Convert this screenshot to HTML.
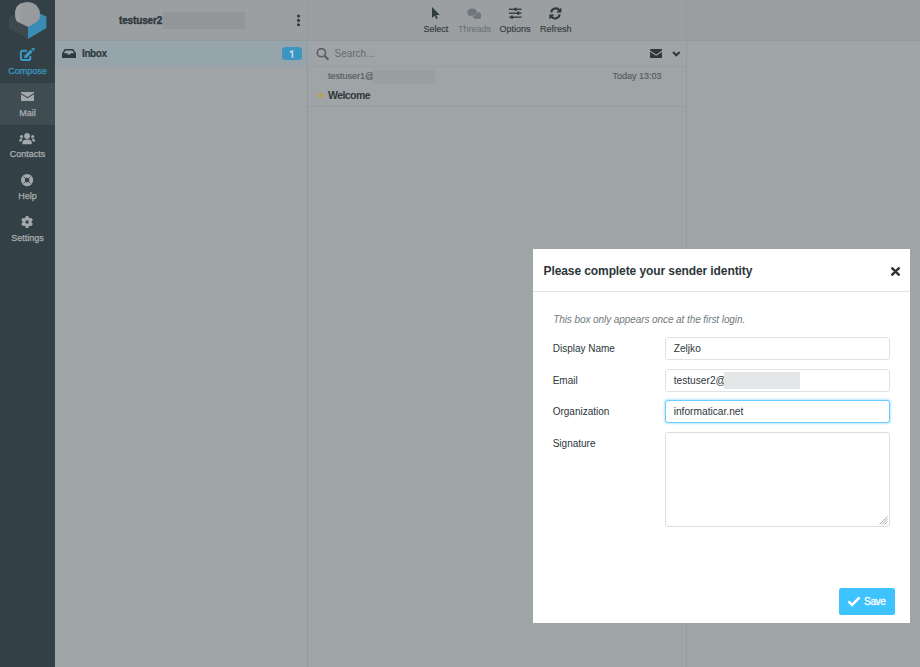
<!DOCTYPE html>
<html><head><meta charset="utf-8">
<style>
*{box-sizing:border-box;margin:0;padding:0}
html,body{width:920px;height:667px;overflow:hidden;background:#9fa4a6;font-family:"Liberation Sans",sans-serif}
.a{position:absolute}
#side{left:0;top:0;width:55px;height:667px;background:#334045}
.mi{position:absolute;left:0;width:55px;height:41.5px;color:#a3a8aa;font-size:9px}
.mi .t{position:absolute;left:0;width:55px;text-align:center;line-height:9px;white-space:nowrap;-webkit-text-stroke:0.25px currentColor;color:#abafb1}
.mi svg{position:absolute}
.hdr{position:absolute;left:0;top:0;right:0;height:41px;background:#9b9fa1;border-bottom:1px solid #93989a}
.vb{position:absolute;top:0;width:1px;height:667px;background:#959a9c}
.tb{position:absolute;top:24.8px;font-size:9px;line-height:9px;color:#343e42;-webkit-text-stroke:0.15px currentColor;white-space:nowrap}
.lbl{position:absolute;left:20px;font-size:10px;line-height:10px;color:#2c363a;white-space:nowrap}
.inp{position:absolute;left:132px;width:225px;height:23.5px;border:1px solid #dfe2e4;border-radius:3px;background:#fff}
.inp span{position:absolute;left:8px;top:6.6px;font-size:10.2px;line-height:10px;color:#2c363a;white-space:nowrap}
</style></head><body>
<div id="side" class="a">
  <svg class="a" style="left:0;top:0" width="55" height="42" viewBox="0 0 55 42">
    <polygon points="9,17.5 27.5,8 28,27 28,38.8 9,28.5" fill="#3d494e"/>
    <polygon points="27.5,8 46.2,16.5 46.2,28 28,38.8 28,27" fill="#3a8cb4"/>
    <circle cx="27.6" cy="14.3" r="12.4" fill="#989b9d"/>
    <path d="M22.5,2.6 q-7.5,2.5 -7.5,11.7 q0,9.2 7.5,11.7 q-3,-5 -3,-11.7 q0,-6.7 3,-11.7z" fill="#9ea1a3"/>
    <polygon points="9,17.5 28,27 28,38.8 9,28.5" fill="#3d494e"/>
    <polygon points="28,27 46.2,16.5 46.2,28 28,38.8" fill="#3a8cb4"/>
  </svg>
  <div class="mi" style="top:41.5px;color:#3a93bd">
    <svg style="left:19px;top:6px" width="17" height="15" viewBox="0 0 17 15">
      <path d="M8,2.8 h-4.6 q-1.5,0 -1.5,1.5 v6.3 q0,1.5 1.5,1.5 h6.4 q1.5,0 1.5,-1.5 v-2.6" stroke="#3b97c3" stroke-width="2" fill="none"/>
      <path d="M5,10.3 l0.6,-2.8 l6,-6 l2.2,2.2 l-6,6 z" fill="#3b97c3"/>
      <path d="M12.4,0.8 l1.2,-1.2 q0.6,-0.5 1.1,0 l1.1,1.1 q0.5,0.5 0,1.1 l-1.2,1.2 z" fill="#3b97c3"/>
    </svg>
    <div class="t" style="top:25px;color:#3b97c3">Compose</div>
  </div>
  <div class="mi" style="top:83px;background:#3f4c52">
    <svg style="left:21px;top:9px" width="13" height="9" viewBox="0 0 13 9">
      <path d="M0,0 h13 v1 l-6.5,4 -6.5,-4 z M0,2.2 l6.5,4 6.5,-4 v6.8 h-13 z" fill="#a3a8aa"/>
    </svg>
    <div class="t" style="top:25.5px">Mail</div>
  </div>
  <div class="mi" style="top:124.5px">
    <svg style="left:19px;top:8px" width="17" height="12" viewBox="0 0 17 12">
      <circle cx="8.1" cy="3" r="2.9" fill="#a3a8aa"/>
      <circle cx="2.5" cy="3.5" r="1.6" fill="#a3a8aa"/>
      <circle cx="13.7" cy="3.5" r="1.6" fill="#a3a8aa"/>
      <path d="M3.4,11.3 v-1.6 q0,-3.3 4.7,-3.3 q4.7,0 4.7,3.3 v1.6 z" fill="#a3a8aa"/>
      <path d="M0.2,8.5 v-1 q0,-1.9 2.3,-1.9 h1.3 q-1,0.9 -1.2,2.9z M16,8.5 v-1 q0,-1.9 -2.3,-1.9 h-1.3 q1,0.9 1.2,2.9z" fill="#a3a8aa"/>
    </svg>
    <div class="t" style="top:25.5px">Contacts</div>
  </div>
  <div class="mi" style="top:166px">
    <svg style="left:21px;top:7.5px" width="13" height="13" viewBox="0 0 13 13">
      <circle cx="6.1" cy="6.1" r="4.2" stroke="#a3a8aa" stroke-width="3.8" fill="none"/>
      <path d="M2.6,2.6 l2,2 M9.6,2.6 l-2,2 M2.6,9.6 l2,-2 M9.6,9.6 l-2,-2" stroke="#334045" stroke-width="0.8"/>
    </svg>
    <div class="t" style="top:26px">Help</div>
  </div>
  <div class="mi" style="top:207.5px">
    <svg style="left:21px;top:8.5px" width="13" height="13" viewBox="0 0 13 13">
      <g fill="#a3a8aa"><circle cx="6.1" cy="6" r="4.7"/>
      <rect x="4.6" y="0.1" width="3" height="11.8" rx="0.6" transform="rotate(0 6.1 6)"/>
      <rect x="4.6" y="0.1" width="3" height="11.8" rx="0.6" transform="rotate(60 6.1 6)"/>
      <rect x="4.6" y="0.1" width="3" height="11.8" rx="0.6" transform="rotate(120 6.1 6)"/></g>
      <circle cx="6.1" cy="6" r="1.7" fill="#334045"/>
    </svg>
    <div class="t" style="top:26.2px">Settings</div>
  </div>
</div>

<!-- folder pane -->
<div class="a" style="left:55px;top:0;width:253px;height:667px">
  <div class="hdr"></div>
  <div class="a" style="left:64px;top:15.8px;font-size:10px;line-height:10px;font-weight:bold;color:#2f393d;letter-spacing:-0.15px;-webkit-text-stroke:0.35px currentColor">testuser2</div>
  <div class="a" style="left:108px;top:12px;width:82px;height:16.5px;background:#929698;filter:blur(0.6px)"></div>
  <svg class="a" style="left:241px;top:14px" width="5" height="13" viewBox="0 0 5 13">
    <circle cx="2.5" cy="2" r="1.55" fill="#2f393d"/><circle cx="2.5" cy="6.4" r="1.55" fill="#2f393d"/><circle cx="2.5" cy="10.7" r="1.55" fill="#2f393d"/>
  </svg>
  <div class="a" style="left:0;top:41px;width:253px;height:25.3px;background:#96a4ab"></div>
  <svg class="a" style="left:7px;top:48.7px" width="14" height="9.2" viewBox="0 0 14 10" preserveAspectRatio="none">
    <path d="M2.8,0 h8.4 l2.8,4.5 v4.5 q0,1 -1,1 h-12 q-1,0 -1,-1 v-4.5 z M3.6,1.5 l-1.8,3 h3.2 l1,1.4 h2 l1,-1.4 h3.2 l-1.8,-3 z" fill="#2f393d" fill-rule="evenodd"/>
  </svg>
  <div class="a" style="left:27px;top:48.5px;font-size:10px;line-height:10px;font-weight:bold;color:#2f393d;letter-spacing:-0.4px;-webkit-text-stroke:0.2px currentColor">Inbox</div>
  <div class="a" style="left:227px;top:46.8px;width:20px;height:13px;border-radius:3.5px;background:#3d95c1"></div>
  <svg class="a" style="left:234px;top:49.5px" width="6" height="8" viewBox="0 0 6 8"><path d="M2.6,0.3 h1.6 v7.4 h-1.6 v-5.5 l-1.9,0.7 v-1.4z" fill="#bcdcec"/></svg>
</div>


<!-- list pane -->
<div class="a" style="left:308px;top:0;width:378px;height:667px">
  <div class="hdr"></div>
  <svg class="a" style="left:124px;top:7px" width="8" height="12" viewBox="0 0 8 12">
    <path d="M0,0 v11 l2.6,-2.5 l1.6,3.5 l1.6,-0.8 l-1.6,-3.3 h3.6 z" fill="#2f393d"/>
  </svg>
  <div class="tb" style="left:115.5px;letter-spacing:-0.05px">Select</div>
  <svg class="a" style="left:159px;top:7.5px" width="15" height="12" viewBox="0 0 15 12">
    <ellipse cx="9.9" cy="7.5" rx="4.3" ry="3.6" fill="#6e777b"/>
    <path d="M12,10 l1.6,1.3 l-0.4,-2.2z" fill="#6e777b"/>
    <ellipse cx="5.1" cy="4.1" rx="5.3" ry="4" fill="#9c9fa1"/>
    <ellipse cx="5.1" cy="4.1" rx="4.8" ry="3.6" fill="#6e777b"/>
    <path d="M1.8,6.4 l-1.2,1.9 l2.8,-1z" fill="#6e777b"/>
  </svg>
  <div class="tb" style="left:150px;color:#6f777b">Threads</div>
  <svg class="a" style="left:201px;top:7px" width="13" height="12" viewBox="0 0 13 12">
    <g fill="#2f393d"><rect x="0" y="1.6" width="12.5" height="1.3"/><rect x="0" y="5.5" width="12.5" height="1.3"/><rect x="0" y="9.5" width="12.5" height="1.3"/>
    <rect x="5.5" y="0.6" width="2" height="3.2"/><rect x="8.2" y="4.5" width="2" height="3.2"/><rect x="2" y="8.6" width="2" height="3.2"/></g>
  </svg>
  <div class="tb" style="left:191.5px">Options</div>
  <svg class="a" style="left:241px;top:6.5px" width="13" height="13" viewBox="0 0 13 13">
    <path d="M2.2,5.4 A4.5,4.5 0 0 1 10.3,3.3" stroke="#2f393d" stroke-width="2.1" fill="none"/>
    <path d="M12.4,0.5 v5 h-5 z" fill="#2f393d"/>
    <path d="M10.6,7.4 A4.5,4.5 0 0 1 2.5,9.6" stroke="#2f393d" stroke-width="2.1" fill="none"/>
    <path d="M0.4,12.5 v-5 h5 z" fill="#2f393d"/>
  </svg>
  <div class="tb" style="left:232px">Refresh</div>

  <!-- search row -->
  <div class="a" style="left:0;top:41px;width:378px;height:26px;border-bottom:1px solid #989d9f"></div>
  <svg class="a" style="left:8px;top:47.5px" width="13" height="13" viewBox="0 0 13 13">
    <circle cx="5.4" cy="4.7" r="4.1" stroke="#586064" stroke-width="1.6" fill="none"/>
    <path d="M8.4,7.7 l4,4" stroke="#586064" stroke-width="2.1"/>
  </svg>
  <div class="a" style="left:26.5px;top:49.2px;font-size:10px;line-height:10px;color:#656d71">Search...</div>
  <svg class="a" style="left:341.5px;top:49px" width="12.3" height="9" viewBox="0 0 13 9" preserveAspectRatio="none">
    <path d="M1,0 h11 q1,0 1,1 v0.4 l-6.5,4 -6.5,-4 v-0.4 q0,-1 1,-1z M0,2.8 l6.5,4 6.5,-4 v5.2 q0,1 -1,1 h-11 q-1,0 -1,-1z" fill="#2f393d"/>
  </svg>
  <svg class="a" style="left:364.3px;top:50.6px" width="9" height="6" viewBox="0 0 9 6">
    <path d="M1,1 l3.3,3.3 l3.3,-3.3" stroke="#2f393d" stroke-width="2" fill="none"/>
  </svg>

  <!-- message row -->
  <div class="a" style="left:0;top:67px;width:378px;height:40px;border-bottom:1px solid #979c9e"></div>
  <div class="a" style="left:20px;top:71.5px;font-size:9px;line-height:9px;color:#535b5f;-webkit-text-stroke:0.15px currentColor">testuser1@</div>
  <div class="a" style="left:65px;top:69.5px;width:62px;height:14px;background:#999ea0;filter:blur(0.6px)"></div>
  <div class="a" style="left:304.5px;top:71.5px;font-size:9px;line-height:9px;color:#535b5f;-webkit-text-stroke:0.15px currentColor">Today 13:03</div>
  <div class="a" style="left:9.8px;top:92.6px;width:5px;height:5px;border-radius:50%;background:#b8a04e"></div>
  <div class="a" style="left:20px;top:89.9px;font-size:10.5px;line-height:10px;font-weight:bold;color:#2f393d;letter-spacing:-0.55px">Welcome</div>
</div>
<div class="vb" style="left:307px"></div>

<!-- content pane -->
<div class="a" style="left:687px;top:0;width:233px;height:667px">
  <div class="hdr"></div>
</div>
<div class="vb" style="left:686px"></div>

<!-- dialog -->
<div class="a" style="left:532.7px;top:249.4px;width:377.6px;height:373.2px;background:#fff">
  <div class="a" style="left:10.8px;top:15.7px;font-size:12px;line-height:12px;font-weight:bold;color:#2c363a;letter-spacing:-0.09px;white-space:nowrap">Please complete your sender identity</div>
  <svg class="a" style="left:358px;top:17.5px" width="9" height="9" viewBox="0 0 9 9">
    <path d="M1.3,1.3 l6.4,6.4 M7.7,1.3 l-6.4,6.4" stroke="#2c363a" stroke-width="2.5" stroke-linecap="round"/>
  </svg>
  <div class="a" style="left:0;top:41.5px;width:377px;height:1px;background:#e3e3e3"></div>
  <div class="a" style="left:20.5px;top:66px;font-size:10px;line-height:10px;font-style:italic;color:#727a7e;letter-spacing:-0.08px;white-space:nowrap">This box only appears once at the first login.</div>

  <div class="lbl" style="top:94.8px">Display Name</div>
  <div class="inp" style="top:87.5px"><span>Zeljko</span></div>
  <div class="lbl" style="top:126.4px">Email</div>
  <div class="inp" style="top:119.5px"><span>testuser2@</span></div>
  <div class="a" style="left:191.5px;top:122.5px;width:76px;height:17px;background:#e4e6e7;filter:blur(0.6px)"></div>
  <div class="lbl" style="top:158px">Organization</div>
  <div class="inp" style="top:150.5px;border-color:#6dcdfc;box-shadow:0 0 2px 1px rgba(55,190,255,.35)"><span>informaticar.net</span></div>
  <div class="lbl" style="top:189.8px">Signature</div>
  <div class="inp" style="top:182.5px;height:95.3px;border-color:#dcdde3">
    <svg class="a" style="right:1px;bottom:1px" width="10" height="10" viewBox="0 0 10 10">
      <path d="M9.5,1.5 l-8,8 M9.5,4 l-5.5,5.5 M9.5,6.5 l-3,3 M9.5,9 l-0.5,0.5" stroke="#7f8487" stroke-width="0.7"/>
    </svg>
  </div>

  <div class="a" style="left:306.6px;top:339px;width:55.4px;height:27px;border-radius:2.5px;background:#3fc3ff">
    <svg class="a" style="left:7.5px;top:7.5px" width="14" height="11" viewBox="0 0 14 11">
      <path d="M1.5,5.3 l3.6,3.6 l7.5,-7.5" stroke="#fff" stroke-width="2.5" fill="none"/>
    </svg>
    <div class="a" style="left:24.8px;top:8.5px;font-size:10px;line-height:10px;color:#fff;letter-spacing:-0.35px;-webkit-text-stroke:0.3px #fff">Save</div>
  </div>
</div>
</body></html>
